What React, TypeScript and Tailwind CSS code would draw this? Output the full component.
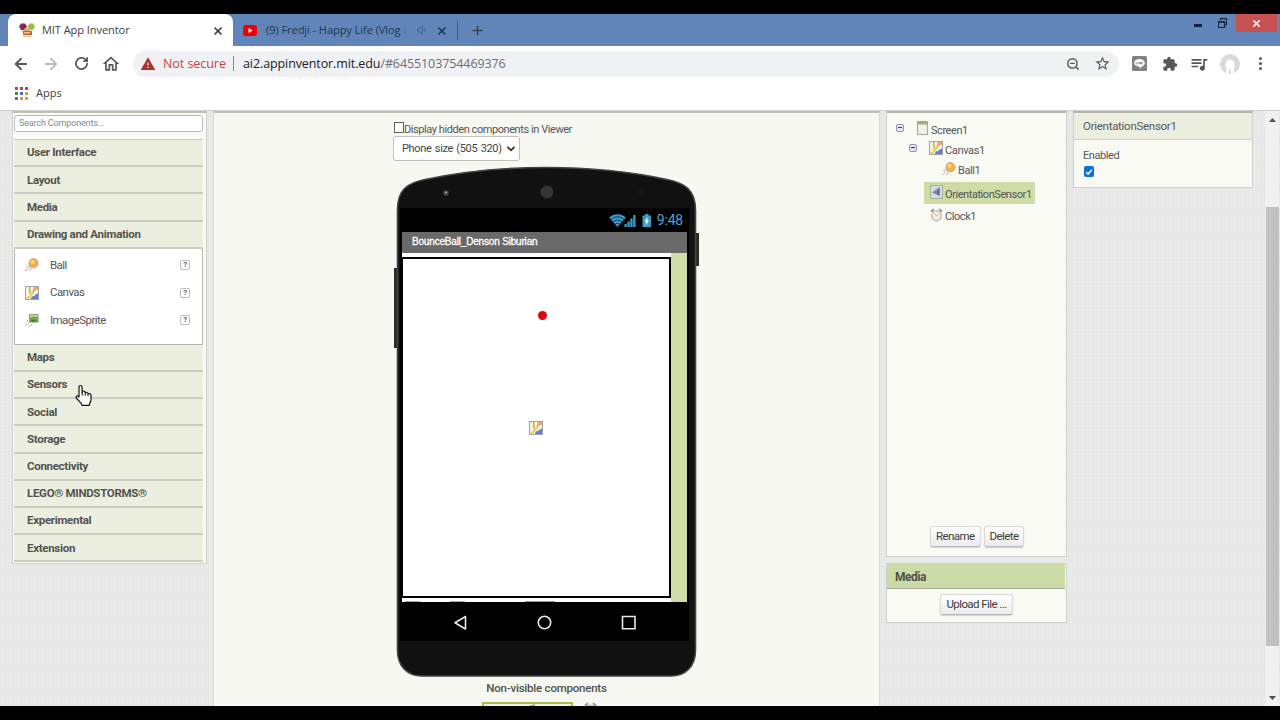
import React from 'react';
import { ArrowLeft, ArrowRight, Plus, RotateCw, Volume1, X, ZoomOut } from 'lucide-react';
import { MdExtension, MdOutlineHome, MdQueueMusic, MdStarBorder, MdWarning } from 'react-icons/md';

const LINEN = 'bg-[#e8e8e8] bg-[repeating-linear-gradient(0deg,rgba(255,255,255,.12)_0_1px,transparent_1px_3px),repeating-linear-gradient(90deg,rgba(0,0,0,.01)_0_1px,transparent_1px_4px)]';

// ── Icons ────────────────────────────────────────────────────────────────────
const BallIcon: React.FC = () => (
  <svg width="14" height="14" viewBox="0 0 14 14" className="shrink-0">
    <path d="M5 8 0.5 13M3 7.5 1 9.5M6.500 10.500 4 13" stroke="#a0a0a0" strokeWidth="1" strokeDasharray="2 .6" />
    <circle cx="8.500" cy="5.200" r="4.600" fill="#f0b050" stroke="#c29a5c" strokeWidth=".7" />
    <circle cx="7.500" cy="4" r="2" fill="#fbd58e" />
  </svg>
);

const CanvasIcon: React.FC<{ size?: number }> = ({ size = 14 }) => (
  <svg width={size} height={size} viewBox="0 0 14 14" className="shrink-0">
    <rect x=".5" y=".5" width="13" height="13" fill="#f7f3e4" stroke="#9da3ad" />
    <path d="M6 13C6.500 9 9.500 11 10.500 8.500L13 7.500V13Z" fill="#5d84cd" />
    <path d="M13 1H10C7.500 1 9 4 7 6.500l1.300 1C9.500 5 10.500 4 13 3.500Z" fill="#f0a860" />
    <path d="M1.500 12C5 12 6.500 9 7.500 7" stroke="#e8cf5a" strokeWidth="2" fill="none" />
    <path d="M5 1C3.500 4 6 4 4.800 8" stroke="#c3bf4e" strokeWidth="1.800" fill="none" />
  </svg>
);

const SpriteIcon: React.FC = () => (
  <svg width="14" height="14" viewBox="0 0 14 14" className="shrink-0">
    <path d="M4.500 9 .5 13M3 7 1 9M7.500 10.500 4.500 13.500" stroke="#999" strokeDasharray="2 .6" />
    <rect x="4.500" y="1.500" width="8.500" height="7.500" fill="#76a53b" stroke="#8b9a80" />
    <path d="M5 2h7.500v2L8.500 3.500 5 4.500Z" fill="#c3d6b4" />
    <path d="M5 8.500 8 6.500l4.500 2Z" fill="#456f26" />
  </svg>
);

const ScreenIcon: React.FC = () => (
  <svg width="11" height="14" viewBox="0 0 11 14" className="shrink-0">
    <rect x=".5" y=".5" width="10" height="13" fill="#eff0ea" stroke="#a3a99b" />
    <path d="M0 0h11v3.500H0Z" fill="#a3b075" />
  </svg>
);

const SensorIcon: React.FC = () => (
  <svg width="13" height="14" viewBox="0 0 13 14" className="shrink-0">
    <rect x=".5" y=".5" width="12" height="13" fill="#d5dbe2" stroke="#a6b19a" />
    <path d="M2 7.500 9.500 2V11Z" fill="#8088b8" />
    <path d="M9.500 2V11L7 8.500Z" fill="#5a6294" />
  </svg>
);

const ClockIcon: React.FC = () => (
  <svg width="13" height="14" viewBox="0 0 13 14" className="shrink-0">
    <path d="M1 3.500 4 1.200M12 3.500 9 1.200" stroke="#8f8f8f" strokeWidth="1.800" fill="none" />
    <circle cx="6.500" cy="7.800" r="4.800" fill="#f6efe4" stroke="#b5b0a8" strokeWidth="1.200" />
    <path d="M4.500 5.500 6.500 8 8.500 6.200" stroke="#e5a35c" fill="none" />
  </svg>
);

const LogoIcon: React.FC = () => (
  <svg width="16" height="15" viewBox="0 0 16 15" className="shrink-0">
    <path d="M2 .5h4l2 3-2 3.500H2L0 3.500Z" fill="#8a2451" />
    <path d="M10.500.5h3.500l2 3-2 3.500h-4L8.500 3.500Z" fill="#9cbf3b" />
    <path d="M5 5.500h6v2.500H5Z" fill="#e9a06b" />
    <path d="M3.500 8h9.500v4H4.500Z" fill="#b5683c" />
    <path d="M5 9h6v1.500H5Z" fill="#ecc18d" />
    <path d="M4 12.500h8v1.500H4Z" fill="#ecc18d" />
  </svg>
);

const HandCursor: React.FC = () => (
  <svg width="18" height="23" viewBox="0 0 18 23" className="absolute left-[62px] top-[271px]">
    <path
      d="M5.500 1.500c1 0 1.600.7 1.600 1.700v5l.3-.9c1.400-.7 2.600 0 2.800 1.200 1.300-.6 2.500 0 2.800 1.200 1.500-.6 3 .2 3 1.900v4.200c0 1.600-.9 2.500-1.300 3.600l-.4 2H7l-.4-1.600L1.300 14c-.8-1.500.8-2.700 2-1.700L4 13V3.200c0-1 .5-1.700 1.500-1.700Z"
      fill="#fff" stroke="#111" strokeWidth="1.200" strokeLinejoin="round"
    />
    <path d="M7.200 8v3.600M10.200 8.700v3M13 10v2" stroke="#111" strokeWidth="1.100" />
  </svg>
);

const HelpBadge: React.FC = () => (
  <span className="flex h-[10px] w-[10px] items-center justify-center rounded-[2px] border border-[#bcbcbc] text-[8px] leading-none font-bold text-[#666]">?</span>
);

const Collapse: React.FC = () => (
  <span className="flex h-[8px] w-[8px] items-center justify-center rounded-[2px] border border-[#9393b8] bg-[#e4e4f2]">
    <span className="h-px w-[4px] bg-[#33339a]" />
  </span>
);

// ── Browser chrome ───────────────────────────────────────────────────────────
const TabStrip: React.FC = () => (
  <div className="flex h-8 bg-[#6185b9] pl-2 text-[11px] text-[#3c4043]">
    <div className="flex w-[225px] items-center rounded-t-lg bg-white pl-[11px]">
      <LogoIcon />
      <span className="ml-[7px] w-[165px] tracking-[-0.050px]">MIT App Inventor</span>
      <X size={12} strokeWidth={3.400} className="mt-[1px] ml-[5px]" />
    </div>
    <div className="flex w-[224px] items-center pl-[10px] text-[#1d3557]">
      <svg width="14" height="11" viewBox="0 0 14 11" className="shrink-0">
        <rect width="14" height="11" rx="2.500" fill="#f00000" />
        <path d="M5.500 3v5l4.200-2.500Z" fill="#fff" />
      </svg>
      <span className="ml-[9px] w-[144px] tracking-[-0.050px] whitespace-nowrap">
        (9) Fredji - Happy Life (Vlog <span className="text-[#5577a8]">I</span>
      </span>
      <Volume1 size={12} className="ml-[7px] shrink-0 text-[#3f5f8c]" />
      <X size={12} strokeWidth={3.200} className="mt-[1px] ml-[7px] shrink-0" />
    </div>
    <div className="mt-[7px] h-[19px] w-px bg-[#3f5982]" />
    <Plus size={15} strokeWidth={2.200} className="mt-[9px] ml-[12px]" />
    <div className="ml-auto flex">
      <div className="mt-[10px] mr-[16px] h-[3px] w-[8px] bg-[#16233a]" />
      <svg width="9" height="10" viewBox="0 0 9 10" className="mt-[4px] mr-[9px]" fill="none" stroke="#16233a">
        <path d="M.5 3.500h6v6h-6ZM.5 4.200h6M2.500 2V.7h6V7H7.200" strokeWidth="1.200" />
      </svg>
      <div className="mr-[3px] flex h-[18px] w-[41px] items-center justify-center bg-[#c75050] text-white">
        <X size={11} strokeWidth={3.400} />
      </div>
    </div>
  </div>
);

const Toolbar: React.FC = () => (
  <div className="flex h-[34px] items-center bg-white pt-px text-[#55585c]">
    <ArrowLeft size={18} strokeWidth={2.400} className="ml-[12px]" />
    <ArrowRight size={18} strokeWidth={2.400} className="ml-[12px] text-[#bcbcbc]" />
    <RotateCw size={15} strokeWidth={2.800} className="ml-[14px]" />
    <MdOutlineHome size={20} className="ml-[12px]" />
    <div className="ml-[12px] flex h-[26px] w-[986px] items-center rounded-full bg-[#eff1f4] text-[12.500px]">
      <MdWarning size={16} className="ml-[7px] text-[#b3302a]" />
      <span className="mt-px ml-[7px] w-[64px] tracking-[-0.050px] whitespace-nowrap text-[#c0473f]">Not secure</span>
      <span className="ml-[6px] h-[15px] w-px bg-[#80868b]" />
      <span className="mt-px ml-[9px] tracking-[-0.100px] text-[#202124]">
        ai2.appinventor.mit.edu<span className="text-[#6b6f74]">/#6455103754469376</span>
      </span>
      <ZoomOut size={14} strokeWidth={2.400} className="ml-auto" />
      <MdStarBorder size={17} className="mr-[8px] ml-[14px]" />
    </div>
    <svg width="15" height="15" viewBox="0 0 15 15" className="ml-[13px]">
      <rect width="15" height="15" rx="1.500" fill="#828282" />
      <path d="M7.500 3c3.200 0 5.300 1.700 5.300 4s-2 3.300-5.300 5.500V10.600C4.300 10.400 2.200 9 2.200 7S4.300 3 7.500 3Z" fill="#fff" />
      <path d="M4.200 6v2h1M6.200 6v2M7.200 8V6l1.300 2V6M10.800 6H9.600v2h1.200M9.600 7h1" stroke="#828282" strokeWidth=".7" fill="none" />
    </svg>
    <MdExtension size={16} className="ml-[15px]" />
    <MdQueueMusic size={20} className="ml-[11px]" />
    <svg width="20" height="20" viewBox="0 0 20 20" className="ml-[11px]">
      <circle cx="10" cy="10" r="10" fill="#dadada" />
      <path d="M6.500 19v-5C5 12 5 6 10 5.500c5 0 5.500 5.500 4 8.500v4.500l-3 1.300v-4.500H9l-.3 4.500Z" fill="#fff" />
    </svg>
    <div className="ml-[19px] flex flex-col gap-[2px]">
      <i className="h-[3px] w-[3px] rounded-full bg-[#55585c]" />
      <i className="h-[3px] w-[3px] rounded-full bg-[#55585c]" />
      <i className="h-[3px] w-[3px] rounded-full bg-[#55585c]" />
    </div>
  </div>
);

const APP_DOTS = [
  'bg-[#c2453d]', 'bg-[#c2453d]', 'bg-[#c2453d]',
  'bg-[#3f8a55]', 'bg-[#4a76b8]', 'bg-[#d3a63a]',
  'bg-[#3f8a55]', 'bg-[#c9a63a]', 'bg-[#d3a63a]',
];

const Bookmarks: React.FC = () => (
  <div className="flex h-[30px] items-center bg-white pb-[4px] pl-[15px] text-[11px] text-[#3c4043]">
    <div className="grid grid-cols-3 gap-[2px]">
      {APP_DOTS.map((c, i) => <i key={i} className={`h-[3px] w-[3px] ${c}`} />)}
    </div>
    <span className="ml-[8px]">Apps</span>
  </div>
);

// ── Palette ──────────────────────────────────────────────────────────────────
const TOP_DRAWERS = ['User Interface', 'Layout', 'Media', 'Drawing and Animation'];
const BOTTOM_DRAWERS = ['Maps', 'Sensors', 'Social', 'Storage', 'Connectivity', 'LEGO® MINDSTORMS®', 'Experimental', 'Extension'];
const DRAWING_ITEMS = [
  { name: 'Ball', icon: <BallIcon /> },
  { name: 'Canvas', icon: <CanvasIcon /> },
  { name: 'ImageSprite', icon: <SpriteIcon /> },
];

const Drawer: React.FC<{ name: string }> = ({ name }) => (
  <div className="flex h-[27.200px] items-center border-b-2 border-[#cbccc4] bg-[#eceedf] pt-px pl-[13px] text-[11.500px] font-bold tracking-[-0.300px] text-[#53534f]">
    {name}
  </div>
);

const Palette: React.FC = () => (
  <div className="relative ml-[12px] h-[453px] w-[195px] shrink-0 border border-t-2 border-[#cfd0ce] border-t-[#bfc2b6] bg-[#fafbf5] pr-[3px] pl-px">
    <div className="mt-[2px] flex h-[17px] items-center rounded-[3px] border border-[#b9bbb8] bg-white pl-[4px] text-[9px] tracking-[-0.150px] text-[#85888a]">
      Search Components...
    </div>
    <div className="mt-[7px] border-t border-[#cbccc4]">
      {TOP_DRAWERS.map(d => <Drawer key={d} name={d} />)}
    </div>
    <div className="h-[96px] border border-t-0 border-[#b5b6b1] bg-white pt-[3px]">
      {DRAWING_ITEMS.map(item => (
        <div key={item.name} className="flex h-[27.200px] items-center pr-[12px] pl-[10px] text-[11.500px] tracking-[-0.560px] text-[#55565a]">
          {item.icon}
          <span className="mt-px mr-auto ml-[11px]">{item.name}</span>
          <HelpBadge />
        </div>
      ))}
    </div>
    {BOTTOM_DRAWERS.map(d => <Drawer key={d} name={d} />)}
    <HandCursor />
  </div>
);

// ── Viewer ───────────────────────────────────────────────────────────────────
const Phone: React.FC = () => (
  <div className="relative ml-[179px] h-[512px] w-[307px] pt-[42px] pl-[7px]">
    <svg width="307" height="512" viewBox="0 0 307 512" className="absolute top-0 left-0">
      <path d="M1 102h4v80H1ZM302 67h4v33h-4Z" fill="#2b2b2b" />
      <path d="M4.500 44C4.500 24 14 17 32 13.500C75 4.500 110 1.500 153.500 1.500S232 4.500 274 13.500C292 17 302.500 24 302.500 44V484C302.500 500 293 510 278 510H29C14 510 4.500 500 4.500 484Z" fill="#111" stroke="#444" strokeWidth="1.600" />
      <circle cx="53" cy="27" r="3" fill="#34383d" />
      <circle cx="53" cy="26.500" r="1.200" fill="#9aa0a8" />
      <circle cx="154" cy="26" r="6.500" fill="#333436" />
      <circle cx="249" cy="26" r="4" fill="#171515" />
    </svg>
    <div className="relative h-[433px] w-[289px] bg-black">
      <div className="flex h-[24px] items-center justify-end pr-[6px] font-[Roboto] text-[14px] tracking-[-0.200px] text-[#4ba6d0]">
        <svg width="43" height="15" viewBox="0 0 43 15" className="mr-[5px]">
          <path d="M8.500 14 .2 4.500C5 0 12 0 16.800 4.500Z" fill="#3c9cc8" />
          <path d="M1.800 6.800C6 2.800 11 2.800 15.200 6.800M4 9C7 6.500 10 6.500 13 9M6 11.200c2-1.200 3-1.200 5 0" stroke="#06202c" strokeWidth=".8" fill="none" />
          <path d="M15.500 14v-3h2.300v3ZM18.400 14V8.500h2.300V14ZM21.300 14V5.500h2.300V14ZM24.200 14V2h2.300V14Z" fill="#3c9cc8" />
          <path d="M33.500 2.500H36V1h3.500v1.500H42V14h-8.500Z" fill="#3c9cc8" />
          <path d="M38.500 4 35.500 8.500h1.700L36.500 12.500 40 7.500h-1.700Z" fill="#fff" />
        </svg>
        9:48
      </div>
      <div className="ml-[2px] w-[285px]">
        <div className="flex h-[21px] items-center bg-[#696969] pb-[2px] pl-[10px] font-['Liberation_Sans'] text-[10px] tracking-[-0.180px] text-white">
          <span className="[-webkit-text-stroke:0.3px_white]">BounceBall_Denson Siburian</span>
        </div>
        <div className="flex h-[349px] bg-[#cfdca6]">
          <div className="w-[269px] bg-white pt-[4px]">
            <div className="relative flex h-[341px] items-center justify-center border-2 border-l border-black bg-white">
              <CanvasIcon />
              <i className="absolute top-[52px] left-[135px] h-[9px] w-[9px] rounded-full bg-[#e4000f]" />
            </div>
            <div className="mt-[3px] flex h-px">
              <i className="ml-[3px] w-[15px] bg-[#aaa]" />
              <i className="ml-[30px] w-[15px] bg-[#aaa]" />
              <i className="ml-[60px] w-[30px] bg-[#999]" />
            </div>
          </div>
        </div>
      </div>
      <svg width="289" height="39" viewBox="0 0 289 39" fill="none" stroke="#e8e8e8" strokeWidth="1.600">
        <path d="M65.500 14.500V27L55 20.700Z" strokeLinejoin="round" />
        <circle cx="144.500" cy="20.500" r="6.200" />
        <path d="M222.500 14.500h12.500v12.200H222.500Z" />
      </svg>
    </div>
  </div>
);

const Viewer: React.FC = () => (
  <div className="ml-[6px] h-full w-[667px] shrink-0 overflow-hidden border-x border-t-2 border-[#d9dad5] border-t-[#bfc2b6] bg-[#f7f8f1]">
    <div className="ml-[180px] flex h-[23px] items-end text-[11px] text-[#55565a]">
      <span className="mb-[3px] h-[11px] w-[10px] border border-[#5f5f5f] bg-white" />
      <span className="mb-[-2px] tracking-[-0.430px]">Display hidden components in Viewer</span>
    </div>
    <div className="ml-[179px] flex h-[25px] w-[127px] items-center rounded-[3px] border border-[#c0c0bc] bg-white pl-[8px] text-[11px] text-[#444]">
      <span className="mt-px w-[97px] tracking-[-0.350px] [word-spacing:1px] whitespace-nowrap">Phone size (505 320)</span>
      <svg width="10" height="6" viewBox="0 0 9 6" className="ml-[7px]">
        <path d="m1 1 3.500 3.300L8 1" stroke="#333" strokeWidth="1.800" fill="none" />
      </svg>
    </div>
    <div className="mt-[5px]"><Phone /></div>
    <div className="mt-[2px] text-center text-[11.500px] leading-[17px] font-medium tracking-[-0.220px] text-[#50514c]">Non-visible components</div>
    <div className="mt-[5px] ml-[268px] flex h-[20px]">
      <div className="flex w-[91px] justify-center border-2 border-[#a6be42] bg-[#f2f4e2]">
        <svg width="14" height="6" viewBox="0 0 14 6"><path d="M1 4 14 0V6H0Z" fill="#a2a2a2" /></svg>
      </div>
      <span className="ml-[11px]"><ClockIcon /></span>
    </div>
  </div>
);

// ── Components tree, media, properties ───────────────────────────────────────
const PushButton: React.FC<{ label: string }> = ({ label }) => (
  <button className="h-[21px] rounded-[3px] border border-[#d8d8d6] border-b-[#b8b8b6] bg-linear-to-b from-white to-[#ececec] px-[5px] text-[11.500px] leading-none tracking-[-0.580px] text-[#3c3c3c] shadow-[0_1px_1px_#d5d5d5]">{label}</button>
);

const Tree: React.FC = () => (
  <div className="flex h-[446px] flex-col border border-t-2 border-[#cfd0ce] border-t-[#b4b7aa] bg-[#f9faf3] text-[11px] tracking-[-0.430px] text-[#55565a]">
    <div className="flex h-[25px] items-center pt-[4px] pl-[9px]">
      <Collapse />
      <span className="mr-[3px] ml-[13px]"><ScreenIcon /></span>
      <span className="mt-[7px]">Screen1</span>
    </div>
    <div className="flex h-[20px] items-center pb-px pl-[22px]">
      <Collapse />
      <span className="mr-[2px] ml-[12px]"><CanvasIcon /></span>
      <span className="mt-[7px] tracking-[-0.350px]">Canvas1</span>
    </div>
    <div className="flex h-[22px] items-center pl-[55px]">
      <BallIcon />
      <span className="mt-[5px] ml-[2px]">Ball1</span>
    </div>
    <div className="mt-[2px] ml-[37px] flex h-[22px] w-[111px] items-center bg-[#cfdca6] pl-[6px]">
      <span className="mt-[-2px]"><SensorIcon /></span>
      <span className="mt-[4px] ml-[2px] tracking-[-0.430px]">OrientationSensor1</span>
    </div>
    <div className="flex h-[24px] items-center pb-[2px] pl-[43px]">
      <ClockIcon />
      <span className="mt-[5px] ml-[2px]">Clock1</span>
    </div>
    <div className="mt-auto mb-[9px] ml-[43px] flex gap-[3px]">
      <PushButton label="Rename" />
      <PushButton label="Delete" />
    </div>
  </div>
);

const Media: React.FC = () => (
  <div className="mt-[6px] h-[60px] border border-[#cfd0ce] bg-[#f9faf3]">
    <div className="mr-px flex h-[25px] items-center border-b border-[#a3a99b] bg-[#cbdba6] pt-[2px] pl-[8px] text-[12px] font-bold tracking-[-0.500px] text-[#4f544a]">Media</div>
    <div className="mt-[5px] flex justify-center"><PushButton label="Upload File ..." /></div>
  </div>
);

const Properties: React.FC = () => (
  <div className="ml-[6px] h-[77px] w-[180px] shrink-0 border border-t-2 border-[#cfd0ce] border-t-[#b4b7aa] bg-[#f9faf3] text-[11px] text-[#55565a]">
    <div className="flex h-[27px] items-center border-b border-[#d2d3ca] bg-[#eceedf] pt-[2px] pl-[9px] text-[11.500px] tracking-[-0.280px]">OrientationSensor1</div>
    <div className="mt-[9px] ml-[9px] leading-[14px] tracking-[-0.430px]">Enabled</div>
    <div className="mt-[3px] ml-[10px] flex h-[11px] w-[10px] items-center justify-center rounded-[2px] bg-[#0b6fdc]">
      <svg width="8" height="8" viewBox="0 0 8 8"><path d="m1.200 4.200 1.900 1.900L6.800 1.700" stroke="#fff" strokeWidth="1.500" fill="none" /></svg>
    </div>
  </div>
);

const Scrollbar: React.FC = () => (
  <div className="mr-px flex h-full w-[14px] flex-col items-center bg-[#f1f1f1]">
    <svg width="7" height="4" viewBox="0 0 7 4" className="mt-[7px]"><path d="M0 4 3.500 0 7 4Z" fill="#505050" /></svg>
    <div className="mt-[85px] h-[439px] w-[13px] bg-[#c1c1c1]" />
    <svg width="7" height="4" viewBox="0 0 7 4" className="mt-auto mb-[6px]"><path d="M0 0 3.500 4 7 0Z" fill="#505050" /></svg>
  </div>
);

const App: React.FC = () => (
  <div className="h-[720px] w-[1280px] overflow-hidden bg-black pt-[14px]">
    <div className="font-['Open_Sans',sans-serif]">
      <TabStrip />
      <Toolbar />
      <Bookmarks />
    </div>
    <div className={`flex h-[596px] items-start overflow-hidden border-t border-[#cdcdcd] font-[Roboto,sans-serif] ${LINEN}`}>
      <Palette />
      <Viewer />
      <div className="ml-[6px] w-[181px] shrink-0">
        <Tree />
        <Media />
      </div>
      <Properties />
      <div className="ml-auto h-full"><Scrollbar /></div>
    </div>
  </div>
);

export default App;
